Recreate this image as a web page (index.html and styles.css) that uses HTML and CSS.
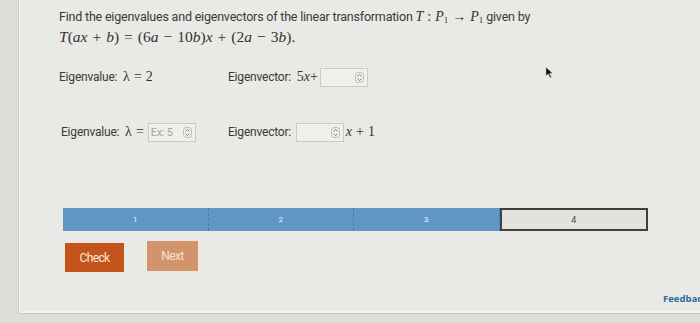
FILE: index.html
```html
<!DOCTYPE html>
<html>
<head>
<meta charset="utf-8">
<link rel="stylesheet" href="styles.css">
</head>
<body>
<div class="panel">
  <div class="question">
    <p class="q1">Find the eigenvalues and eigenvectors of the linear transformation <span class="m"><i>T</i><span class="op">:</span><i class="cal">P</i><sub>1</sub><span class="op">→</span><i class="cal">P</i><sub>1</sub></span> given by</p>
    <p class="q2 m"><i>T</i>(<i>ax</i><span class="op">+</span><i>b</i>)<span class="op">=</span>(6<i>a</i><span class="op">−</span>10<i>b</i>)<i>x</i><span class="op">+</span>(2<i>a</i><span class="op">−</span>3<i>b</i>).</p>
  </div>

  <div class="row row1">
    <div class="cell c1">Eigenvalue: <span class="m">λ<span class="op">=</span>2</span></div>
    <div class="cell c2">Eigenvector: <span class="m">5<i>x</i>+</span><span class="inp"><span class="ph"></span><svg class="spin" viewBox="0 0 9 11"><rect x="0.5" y="0.5" width="8" height="10" rx="3" fill="none" stroke="#a5a5a1" stroke-width="0.7"/><path d="M2.6 4.3 L4.5 2.5 L6.4 4.3 M2.6 6.7 L4.5 8.5 L6.4 6.7" fill="none" stroke="#6f6f6f" stroke-width="0.9"/></svg></span></div>
  </div>

  <div class="row row2">
    <div class="cell c1 shift">Eigenvalue: <span class="m">λ<span class="op">=</span></span><span class="inp"><span class="ph">Ex: 5</span><svg class="spin" viewBox="0 0 9 11"><rect x="0.5" y="0.5" width="8" height="10" rx="3" fill="none" stroke="#a5a5a1" stroke-width="0.7"/><path d="M2.6 4.3 L4.5 2.5 L6.4 4.3 M2.6 6.7 L4.5 8.5 L6.4 6.7" fill="none" stroke="#6f6f6f" stroke-width="0.9"/></svg></span></div>
    <div class="cell c2">Eigenvector: <span class="inp"><span class="ph"></span><svg class="spin" viewBox="0 0 9 11"><rect x="0.5" y="0.5" width="8" height="10" rx="3" fill="none" stroke="#a5a5a1" stroke-width="0.7"/><path d="M2.6 4.3 L4.5 2.5 L6.4 4.3 M2.6 6.7 L4.5 8.5 L6.4 6.7" fill="none" stroke="#6f6f6f" stroke-width="0.9"/></svg></span><span class="m tail"><i>x</i><span class="op">+</span>1</span></div>
  </div>

  <div class="progress">
    <div class="seg done">1</div>
    <div class="seg done">2</div>
    <div class="seg done">3</div>
    <div class="seg current">4</div>
  </div>

  <div class="buttons">
    <div class="btn check">Check</div>
    <div class="btn next">Next</div>
  </div>

  <div class="feedback">Feedback</div>

  <svg class="cursor" viewBox="0 0 10 14"><path d="M1 1 L1 11 L3.6 8.6 L5.6 13 L7.2 12.2 L5.2 8 L8.8 8 Z" fill="#111" stroke="#eee" stroke-width="0.6"/></svg>
</div>
</body>
</html>
```

FILE: styles.css
```css
html, body {
  margin: 0;
  padding: 0;
}
body {
  width: 700px;
  height: 323px;
  overflow: hidden;
  background: #deded9;
  font-family: Roboto, "Liberation Sans", sans-serif;
  color: #3a3a3a;
}
.panel {
  position: relative;
  margin-left: 19px;
  width: 700px;
  height: 313px;
  box-sizing: border-box;
  background: #e9e9e5;
  border-left: 1px solid #f4f4f1;
  border-bottom: 2px solid #f3f3f0;
  box-shadow: -1px 1px 0 #c9c9c5;
  padding: 8px 0 0 39px;
}
.question p {
  margin: 0;
}
.q1 {
  font-size: 12.5px;
  line-height: 17px;
  letter-spacing: -0.2px;
}
.m {
  font-family: "Liberation Serif", "DejaVu Serif", serif;
  font-size: 14px;
  color: #333;
  letter-spacing: 0;
}
.q2.m {
  font-size: 15.5px;
  line-height: 16px;
}
.q2 .op {
  margin: 0 5px;
}
.m i {
  font-style: italic;
}
.op {
  margin: 0 4px;
}
.cal {
  font-size: 14px;
}
sub {
  font-size: 9px;
  vertical-align: -2px;
}
.row {
  display: flex;
  align-items: center;
  font-size: 12px;
  letter-spacing: -0.2px;
}
.row1 {
  margin-top: 22px;
  height: 20px;
}
.row2 {
  margin-top: 35px;
  height: 20px;
}
.cell {
  display: flex;
  align-items: center;
  white-space: pre;
}
.c1 {
  width: 169px;
}
.shift {
  padding-left: 2px;
  width: 167px;
}
.c1 .m, .c2 .m {
  margin-left: 3px;
}
.c2 .m.tail {
  margin-left: 0;
}
.inp {
  display: inline-flex;
  align-items: center;
  justify-content: space-between;
  box-sizing: border-box;
  width: 48px;
  height: 19px;
  border: 1px solid #cbcbc6;
  background: #efefeb;
  padding: 0 3px 0 2px;
  margin: 0 2px 0 2px;
}
.row2 .c1 .inp {
  margin-left: 0;
}
.ph {
  font-size: 11px;
  color: #a3a3a0;
  letter-spacing: -0.3px;
}
.spin {
  width: 9px;
  height: 11px;
}
.progress {
  display: flex;
  margin: 66px 0 0 4px;
  width: 585px;
  height: 23px;
}
.seg {
  flex: 1;
  display: flex;
  align-items: center;
  justify-content: center;
  font-size: 8px;
  box-sizing: border-box;
}
.done {
  background: #6096c4;
  color: #eef3f8;
  border-right: 1px dashed #4c7ba6;
}
.current {
  background: #e2e2de;
  border: 2px solid #3f3f44;
  color: #444;
  font-size: 9px;
}
.buttons {
  display: flex;
  align-items: flex-start;
  margin: 10px 0 0 6px;
}
.btn {
  display: flex;
  align-items: center;
  justify-content: center;
  font-size: 12px;
  letter-spacing: -0.6px;
  color: #fbe8dc;
}
.check {
  width: 59px;
  height: 29px;
  margin-top: 2px;
  background: #c4531c;
}
.next {
  width: 51px;
  height: 30px;
  margin-left: 23px;
  background: #d2946a;
  color: #f6e2d2;
}
.feedback {
  position: absolute;
  left: 643px;
  top: 292px;
  font-family: "Open Sans", "DejaVu Sans", sans-serif;
  font-weight: 700;
  font-size: 9.5px;
  color: #2d6a9c;
}
.cursor {
  position: absolute;
  left: 525px;
  top: 66px;
  width: 9px;
  height: 13px;
}
```
